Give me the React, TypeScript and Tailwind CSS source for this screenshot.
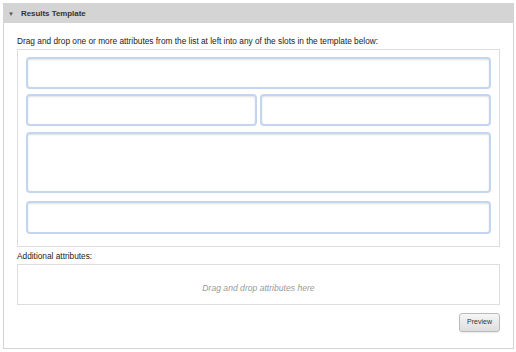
import React from "react";

const slot =
  "rounded-[4px] border-2 border-[#c4d5f0] bg-white shadow-[inset_0_1px_2px_rgba(0,0,0,0.12)]";

export default function App() {
  return (
    <div
      className="w-[516px] h-[352px] bg-white pt-[3px] pl-[3px] pr-[2px]"
      style={{ fontFamily: '"Liberation Sans", Arial, sans-serif' }}
    >
      <div className="h-[346px] border border-[#d4d4d4] flex flex-col">
        <div className="h-[19px] bg-[#d4d4d4] flex items-center pl-[4px] text-[#333]">
          <span className="text-[6px] leading-none mr-[7px] text-[#555]">▼</span>
          <span className="text-[7.9px] font-bold">Results Template</span>
        </div>
        <div className="px-[13px] flex flex-col">
          <div className="mt-[12px] text-[8.3px] leading-[12px] text-[#222]">
            Drag and drop one or more attributes from the list at left into any of the slots in the template below:
          </div>
          <div className="mt-[2px] border border-[#dddddd] pt-[7px] px-[8px] pb-[12px] flex flex-col">
            <div className={`${slot} h-[32px]`} />
            <div className="mt-[5px] flex gap-[3px]">
              <div className={`${slot} h-[32px] flex-1`} />
              <div className={`${slot} h-[32px] flex-1`} />
            </div>
            <div className={`${slot} h-[61px] mt-[6px]`} />
            <div className={`${slot} h-[33px] mt-[8px]`} />
          </div>
          <div className="mt-[3px] text-[8.3px] leading-[12px] text-[#222]">Additional attributes:</div>
          <div className="mt-[2px] h-[41px] border border-[#dddddd] flex items-center justify-center pt-[8px]">
            <span className="text-[8.6px] italic text-[#999]">Drag and drop attributes here</span>
          </div>
          <div className="mt-[8px] flex justify-end">
            <button className="w-[41px] h-[19px] rounded-[3px] border border-[#bbbbbb] bg-gradient-to-b from-[#f6f6f6] to-[#dedede] text-[7px] text-[#333] shadow-[0_1px_1px_rgba(0,0,0,0.08)]">
              Preview
            </button>
          </div>
        </div>
      </div>
    </div>
  );
}
